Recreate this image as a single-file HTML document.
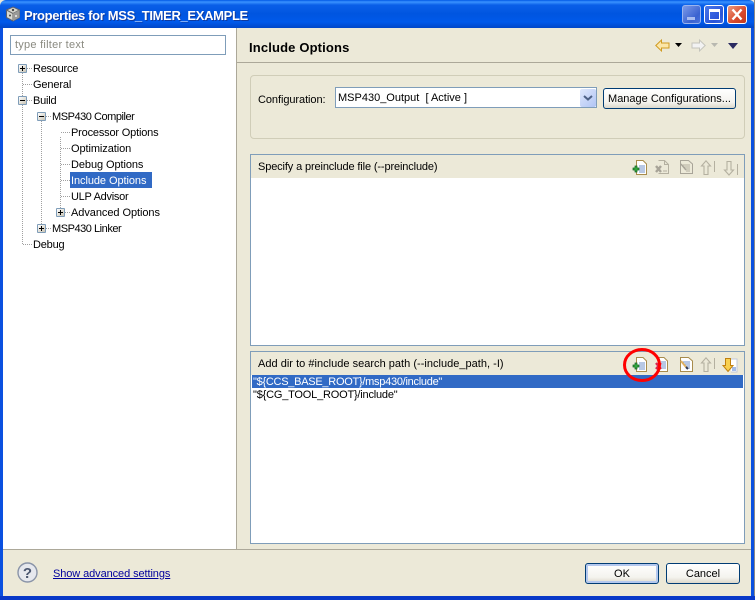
<!DOCTYPE html>
<html><head><meta charset="utf-8"><style>
html,body{margin:0;padding:0;width:755px;height:600px;overflow:hidden;background:#ece9d8}
*{box-sizing:border-box}
body{font:11px/13px "Liberation Sans",sans-serif;color:#000;position:relative}
.a{position:absolute}
.t{position:absolute;white-space:nowrap;line-height:13px;height:13px}
.btn{position:absolute;border:1px solid #003c74;border-radius:3px;background:linear-gradient(#fff,#f4f3ee 70%,#dcd8cb);text-align:center;color:#000}
.hd{position:absolute;width:9px;height:9px;background:linear-gradient(135deg,#fff,#c8c4b4);border:1px solid #7f9db9;border-radius:1px}
.hd:before{content:"";position:absolute;left:1px;top:3px;width:5px;height:1px;background:#000}
.hd.p:after{content:"";position:absolute;left:3px;top:1px;width:1px;height:5px;background:#000}
.dh{position:absolute;height:1px;background:repeating-linear-gradient(90deg,#a0a0a0 0 1px,transparent 1px 2px)}
.dv{position:absolute;width:1px;background:repeating-linear-gradient(180deg,#a0a0a0 0 1px,transparent 1px 2px)}
svg{position:absolute;overflow:visible}
</style></head><body>
<!-- frame -->
<div class="a" style="left:0;top:0;width:755px;height:28px;background:linear-gradient(#0058e6 0,#3a93ff 2px,#0a5fe8 5px,#0055e0 14px,#0059ea 22px,#0046c8 28px);border-radius:6px 6px 0 0"></div>
<div class="a" style="left:0;top:28px;width:3px;height:572px;background:#0a50e0"></div>
<div class="a" style="left:751px;top:28px;width:3px;height:572px;background:#0a50e0"></div>
<div class="a" style="left:754px;top:0;width:1px;height:600px;background:#8a8a8a"></div>
<div class="a" style="left:0;top:596px;width:755px;height:4px;background:#0838c8"></div>
<!-- title -->
<svg style="left:5px;top:6px" width="16" height="16" viewBox="0 0 16 16"><path d="M8 1 14.500 4 14.500 11.500 8 15 1.500 11.500 1.500 4Z" fill="#d8d8d0" stroke="#5a6070"/><path d="M1.500 4 8 7.500 14.500 4M8 7.500V15" fill="none" stroke="#6a6a6a"/><path d="M8 7.500 14.500 4 14.500 11.500 8 15Z" fill="#9a9a98"/><circle cx="8" cy="4" r="1.200" fill="#444"/><circle cx="5" cy="9.500" r="1" fill="#444"/><circle cx="11" cy="10" r="1" fill="#eee"/></svg>
<div class="t" style="left:24px;top:8px;height:15px;line-height:15px;color:#fff;font-weight:bold;font-size:13px;letter-spacing:-.34px;text-shadow:1px 1px 0 #0f3a9e">Properties for MSS_TIMER_EXAMPLE</div>
<!-- window buttons -->
<div class="a" style="left:682px;top:5px;width:19px;height:19px;border:1px solid #9bb4ee;border-radius:3px;background:linear-gradient(135deg,#7c9ae8,#3a62d0 70%,#4a72dc)"><div class="a" style="left:4px;top:11px;width:8px;height:3px;background:#a8bcf0"></div></div>
<div class="a" style="left:704px;top:5px;width:20px;height:19px;border:1px solid #fff;border-radius:3px;background:linear-gradient(135deg,#4a78ea,#2a54d8 70%,#3c68e4)"><div class="a" style="left:4px;top:3px;width:11px;height:11px;border:1px solid #fff;border-top-width:3px"></div></div>
<div class="a" style="left:727px;top:5px;width:20px;height:19px;border:1px solid #fff;border-radius:3px;background:linear-gradient(135deg,#ec9a80,#d8492c 60%,#c23a1c)"><svg style="left:3px;top:2px" width="12" height="13" viewBox="0 0 12 13"><path d="M1.500 1.500 10.500 11.500M10.500 1.500 1.500 11.500" stroke="#fff" stroke-width="2.400"/></svg></div>
<!-- left pane -->
<div class="a" style="left:3px;top:28px;width:233px;height:521px;background:#fff"></div>
<div class="a" style="left:236px;top:28px;width:1px;height:521px;background:#aca899"></div>
<div class="a" style="left:10px;top:35px;width:216px;height:20px;border:1px solid #7f9db9;background:#fff"></div>
<div class="t" style="left:15px;top:39px;color:#8a8a80;letter-spacing:.25px">type filter text</div>
<!-- tree lines -->
<div class="dv" style="left:22px;top:73px;height:172px"></div>
<div class="dv" style="left:41px;top:121px;height:107px"></div>
<div class="dv" style="left:60px;top:137px;height:75px"></div>
<div class="dh" style="left:27px;top:68px;width:6px"></div>
<div class="dh" style="left:23px;top:84px;width:10px"></div>
<div class="dh" style="left:27px;top:100px;width:6px"></div>
<div class="dh" style="left:46px;top:116px;width:6px"></div>
<div class="dh" style="left:61px;top:132px;width:10px"></div>
<div class="dh" style="left:61px;top:148px;width:10px"></div>
<div class="dh" style="left:61px;top:164px;width:10px"></div>
<div class="dh" style="left:61px;top:180px;width:10px"></div>
<div class="dh" style="left:61px;top:196px;width:10px"></div>
<div class="dh" style="left:65px;top:212px;width:6px"></div>
<div class="dh" style="left:46px;top:228px;width:6px"></div>
<div class="dh" style="left:23px;top:244px;width:10px"></div>
<div class="hd p" style="left:18px;top:64px"></div>
<div class="hd" style="left:18px;top:96px"></div>
<div class="hd" style="left:37px;top:112px"></div>
<div class="hd p" style="left:56px;top:208px"></div>
<div class="hd p" style="left:37px;top:224px"></div>
<div class="t" style="left:33px;top:63px;letter-spacing:-.25px">Resource</div>
<div class="t" style="left:33px;top:79px;letter-spacing:-.14px">General</div>
<div class="t" style="left:33px;top:95px;letter-spacing:-.2px">Build</div>
<div class="t" style="left:52px;top:111px;letter-spacing:-.46px">MSP430 Compiler</div>
<div class="t" style="left:71px;top:127px;letter-spacing:-.18px">Processor Options</div>
<div class="t" style="left:71px;top:143px;letter-spacing:-.08px">Optimization</div>
<div class="t" style="left:71px;top:159px;letter-spacing:-.08px">Debug Options</div>
<div class="a" style="left:70px;top:172px;width:82px;height:16px;background:#316ac5"></div>
<div class="t" style="left:71px;top:175px;color:#fff;letter-spacing:-.07px">Include Options</div>
<div class="t" style="left:71px;top:191px;letter-spacing:-.27px">ULP Advisor</div>
<div class="t" style="left:71px;top:207px;letter-spacing:-.06px">Advanced Options</div>
<div class="t" style="left:52px;top:223px;letter-spacing:-.46px">MSP430 Linker</div>
<div class="t" style="left:33px;top:239px;letter-spacing:-.2px">Debug</div>
<!-- right head -->
<div class="t" style="left:249px;top:40px;font-weight:bold;font-size:13px;letter-spacing:.15px;height:15px;line-height:15px">Include Options</div>
<div class="a" style="left:237px;top:62px;width:514px;height:1px;background:#aca899"></div>
<svg style="left:655px;top:39px" width="15" height="13" viewBox="0 0 15 13"><path d="M.8 6.500 6.500 1V4H14V9H6.500V12Z" fill="#fbe6a8" stroke="#d09a20"/></svg>
<svg style="left:675px;top:43px" width="7" height="4"><path d="M0 0H7L3.500 4Z" fill="#000"/></svg>
<svg style="left:691px;top:39px" width="15" height="13" viewBox="0 0 15 13"><path d="M14.200 6.500 8.500 1V4H1V9H8.500V12Z" fill="#f2f2f2" stroke="#c4c4bc"/></svg>
<svg style="left:711px;top:43px" width="7" height="4"><path d="M0 0H7L3.500 4Z" fill="#b8b8b0"/></svg>
<svg style="left:728px;top:43px" width="10" height="6"><path d="M0 0H10L5 6Z" fill="#2a2a60"/></svg>
<!-- config -->
<div class="a" style="left:250px;top:75px;width:495px;height:64px;border:1px solid #d0cdb8;border-radius:4px"></div>
<div class="t" style="left:258px;top:94px;letter-spacing:-.07px">Configuration:</div>
<div class="a" style="left:335px;top:87px;width:262px;height:21px;border:1px solid #7f9db9;background:#fff"></div>
<div class="t" style="left:338px;top:92px">MSP430_Output&nbsp; [ Active ]</div>
<div class="a" style="left:580px;top:89px;width:16px;height:18px;background:linear-gradient(135deg,#dfe8fc,#b0c4f4);border-radius:2px"><svg style="left:3px;top:6px" width="10" height="6"><path d="M1 1 5 4.500 9 1" fill="none" stroke="#4d6185" stroke-width="2"/></svg></div>
<div class="btn" style="left:603px;top:88px;width:133px;height:21px;line-height:20px">Manage Configurations...</div>
<!-- preinclude -->
<div class="a" style="left:250px;top:154px;width:495px;height:192px;border:1px solid #7f9db9;background:#fff"><div class="a" style="left:0;top:0;width:493px;height:23px;background:#ece9d8"></div></div>
<div class="t" style="left:258px;top:161px;letter-spacing:-.13px">Specify a preinclude file (--preinclude)</div>
<!-- top icons -->
<svg style="left:632px;top:160px" width="16" height="16" viewBox="0 0 16 16"><path d="M4.500 .5H11L14.500 4V14.500H4.500Z" fill="#fff" stroke="#a88c4c"/><path d="M7 6H13M7 8H13M7 10H13M7 12H13" stroke="#7090c8"/><path d="M3 6H5V8H7V10H5V12H3V10H1V8H3Z" fill="#38b040" stroke="#106020" stroke-width=".7"/></svg>
<svg style="left:655px;top:160px" width="14" height="16" viewBox="0 0 14 16"><path d="M3.500 .5H9.500L13.500 4.500V13.500H3.500" fill="none" stroke="#b4b0a0"/><path d="M9.500 .5V4.500H13.500" fill="none" stroke="#b4b0a0"/><path d="M1 6 6 12M6 6 1 12" stroke="#a8a498" stroke-width="2.400"/><path d="M8 11H12" stroke="#b4b0a0"/></svg>
<svg style="left:680px;top:160px" width="13" height="15" viewBox="0 0 13 15"><path d="M.5 .5H8.500L12.500 4V13.500H.5Z" fill="none" stroke="#a8a498"/><path d="M3 5H10M3 7H10M5 9H10M6 11H10" stroke="#b4b0a0"/><path d="M1 4 6 10" stroke="#a8a498" stroke-width="1.500"/></svg>
<svg style="left:700px;top:160px" width="16" height="16" viewBox="0 0 16 16"><path d="M6 .8 10.500 6H8V14.500H4V6H1.500Z" fill="none" stroke="#b4b0a0" stroke-width="1.100"/><path d="M14.500 1V12" stroke="#b4b0a0"/></svg>
<svg style="left:723px;top:160px" width="16" height="17" viewBox="0 0 16 17"><path d="M6 15 10.500 10H8V1.500H4V10H1.500Z" fill="none" stroke="#b4b0a0" stroke-width="1.100"/><path d="M14.500 4V15" stroke="#b4b0a0"/></svg>
<!-- include path -->
<div class="a" style="left:250px;top:351px;width:495px;height:193px;border:1px solid #7f9db9;background:#fff"><div class="a" style="left:0;top:0;width:493px;height:23px;background:#ece9d8"></div></div>
<div class="t" style="left:258px;top:358px;letter-spacing:.02px">Add dir to #include search path (--include_path, -I)</div>
<div class="a" style="left:252px;top:375px;width:491px;height:13px;background:#316ac5"></div>
<div class="t" style="left:253px;top:376px;color:#fff;letter-spacing:-.27px">"${CCS_BASE_ROOT}/msp430/include"</div>
<div class="t" style="left:253px;top:389px;letter-spacing:-.2px">"${CG_TOOL_ROOT}/include"</div>
<!-- bottom icons -->
<svg style="left:632px;top:357px" width="16" height="16" viewBox="0 0 16 16"><path d="M4.500 .5H11L14.500 4V14.500H4.500Z" fill="#fff" stroke="#a88c4c"/><path d="M7 6H13M7 8H13M7 10H13M7 12H13" stroke="#7090c8"/><path d="M3 6H5V8H7V10H5V12H3V10H1V8H3Z" fill="#38b040" stroke="#106020" stroke-width=".7"/></svg>
<svg style="left:655px;top:357px" width="14" height="16" viewBox="0 0 14 16"><path d="M3.500 .5H9L12.500 4V14.500H3.500Z" fill="#fff" stroke="#a88c4c"/><path d="M6 5H11M6 7H11M6 9H11M6 11H11" stroke="#7090c8"/><path d="M1 6 6 12M6 6 1 12" stroke="#d82850" stroke-width="2.400"/></svg>
<svg style="left:680px;top:357px" width="13" height="15" viewBox="0 0 13 15"><path d="M.5 .5H8.500L12.500 4V14.500H.5Z" fill="#fff" stroke="#a88c4c"/><path d="M3 5H10M4 7H10M5 9H10M6 11H10" stroke="#7090c8"/><path d="M1 4 6 10" stroke="#e0b060" stroke-width="2"/><path d="M6 10 8 12" stroke="#303850" stroke-width="2"/></svg>
<svg style="left:700px;top:357px" width="16" height="16" viewBox="0 0 16 16"><path d="M6 .8 10.500 6H8V14.500H4V6H1.500Z" fill="none" stroke="#b4b0a0" stroke-width="1.100"/><path d="M14.500 1V12" stroke="#b4b0a0"/></svg>
<svg style="left:722px;top:357px" width="16" height="17" viewBox="0 0 16 17"><path d="M9 2H15V15H9" fill="#fff" stroke="#c0c8d8"/><path d="M10 11H14M10 13H14" stroke="#4878d0"/><path d="M6 14.500 11 8.500H8.500V1.500H3.500V8.500H1Z" fill="#f8d050" stroke="#c08010"/></svg>
<!-- red ring -->
<svg style="left:623px;top:348px" width="38" height="34" viewBox="0 0 38 34"><ellipse cx="19" cy="17" rx="17.500" ry="15.500" fill="none" stroke="#f00" stroke-width="3"/></svg>
<!-- footer -->
<div class="a" style="left:3px;top:549px;width:748px;height:1px;background:#aca899"></div>
<svg style="left:17px;top:562px" width="21" height="21" viewBox="0 0 21 21"><circle cx="10.500" cy="10.500" r="9.500" fill="#e6e8ee" stroke="#8a94a8" stroke-width="1.400"/><text x="10.500" y="16" text-anchor="middle" font-family="Liberation Sans" font-weight="bold" font-size="15" fill="#4a5670">?</text></svg>
<div class="t" style="left:53px;top:568px;color:#00009c;text-decoration:underline;letter-spacing:-.09px">Show advanced settings</div>
<div class="btn" style="left:585px;top:563px;width:74px;height:21px;line-height:21px;box-shadow:inset 0 0 0 2px #b4c8ee">OK</div>
<div class="btn" style="left:666px;top:563px;width:74px;height:21px;line-height:21px">Cancel</div>
</body></html>
